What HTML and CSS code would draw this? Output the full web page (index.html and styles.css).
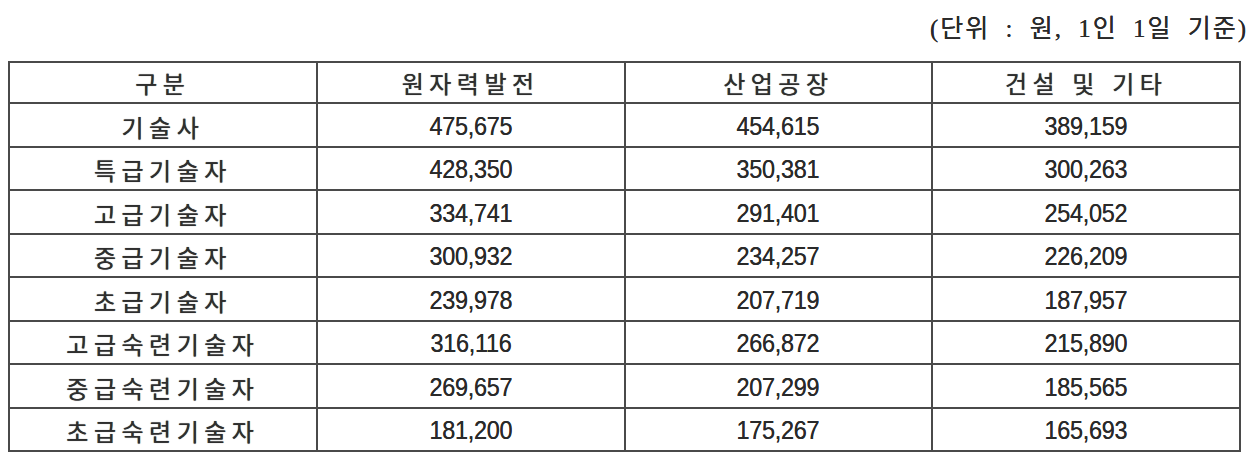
FILE: index.html
```html
<!DOCTYPE html>
<html lang="ko">
<head>
<meta charset="utf-8">
<title>기술자 노임단가</title>
<link rel="stylesheet" href="styles.css">
</head>
<body>
<div class="page">
  <div class="unit">(단위 : 원, 1인 1일 기준)</div>
  <table class="wage">
    <colgroup><col><col><col><col></colgroup>
    <thead>
      <tr><th>구분</th><th>원자력발전</th><th>산업공장</th><th>건설 및 기타</th></tr>
    </thead>
    <tbody>
      <tr><td class="kr">기술사</td><td><span class="num">475,675</span></td><td><span class="num">454,615</span></td><td><span class="num">389,159</span></td></tr>
      <tr><td class="kr">특급기술자</td><td><span class="num">428,350</span></td><td><span class="num">350,381</span></td><td><span class="num">300,263</span></td></tr>
      <tr><td class="kr">고급기술자</td><td><span class="num">334,741</span></td><td><span class="num">291,401</span></td><td><span class="num">254,052</span></td></tr>
      <tr><td class="kr">중급기술자</td><td><span class="num">300,932</span></td><td><span class="num">234,257</span></td><td><span class="num">226,209</span></td></tr>
      <tr><td class="kr">초급기술자</td><td><span class="num">239,978</span></td><td><span class="num">207,719</span></td><td><span class="num">187,957</span></td></tr>
      <tr><td class="kr">고급숙련기술자</td><td><span class="num">316,116</span></td><td><span class="num">266,872</span></td><td><span class="num">215,890</span></td></tr>
      <tr><td class="kr">중급숙련기술자</td><td><span class="num">269,657</span></td><td><span class="num">207,299</span></td><td><span class="num">185,565</span></td></tr>
      <tr><td class="kr">초급숙련기술자</td><td><span class="num">181,200</span></td><td><span class="num">175,267</span></td><td><span class="num">165,693</span></td></tr>
    </tbody>
  </table>
</div>
</body>
</html>
```

FILE: styles.css
```css
html, body {
  margin: 0;
  padding: 0;
  background: #ffffff;
}

.page {
  width: 1248px;
  height: 467px;
  overflow: hidden;
  padding-top: 15px;
  box-sizing: border-box;
}

.unit {
  height: 46px;
  text-align: right;
  margin-right: 0;
  font-family: "Liberation Serif", "Noto Sans CJK KR", serif;
  font-size: 25px;
  line-height: 28px;
  letter-spacing: 2px;
  word-spacing: 7px;
  color: #2a2a2a;
  text-shadow: 0 0 0.6px #2a2a2a;
}

.wage {
  margin-left: 8px;
  width: 1233px;
  table-layout: fixed;
  border-collapse: collapse;
  border: 2px solid #333333;
}

.wage th,
.wage td {
  border: 2px solid #4a4a4a;
  padding: 0;
  text-align: center;
  vertical-align: middle;
  color: #2e2e2e;
}

.wage th {
  height: 39px;
  font-family: "Noto Sans CJK KR", "Noto Sans", sans-serif;
  font-weight: 400;
  font-size: 24px;
  letter-spacing: 5.5px;
  padding-top: 0;
  text-shadow: 0 0 0.7px #2e2e2e;
}

.wage td {
  height: 38.5px;
  padding-top: 3px;
}

.wage .kr {
  font-family: "Noto Sans CJK KR", "Noto Sans", sans-serif;
  font-size: 24px;
  letter-spacing: 5.5px;
  text-shadow: 0 0 0.7px #2e2e2e;
}

.num {
  display: inline-block;
  font-family: "Liberation Sans", Arial, sans-serif;
  font-size: 26px;
  letter-spacing: -0.3px;
  transform: scaleX(0.9);
  color: #2a2a2a;
  text-shadow: 0 0 0.6px #2a2a2a;
}
```
